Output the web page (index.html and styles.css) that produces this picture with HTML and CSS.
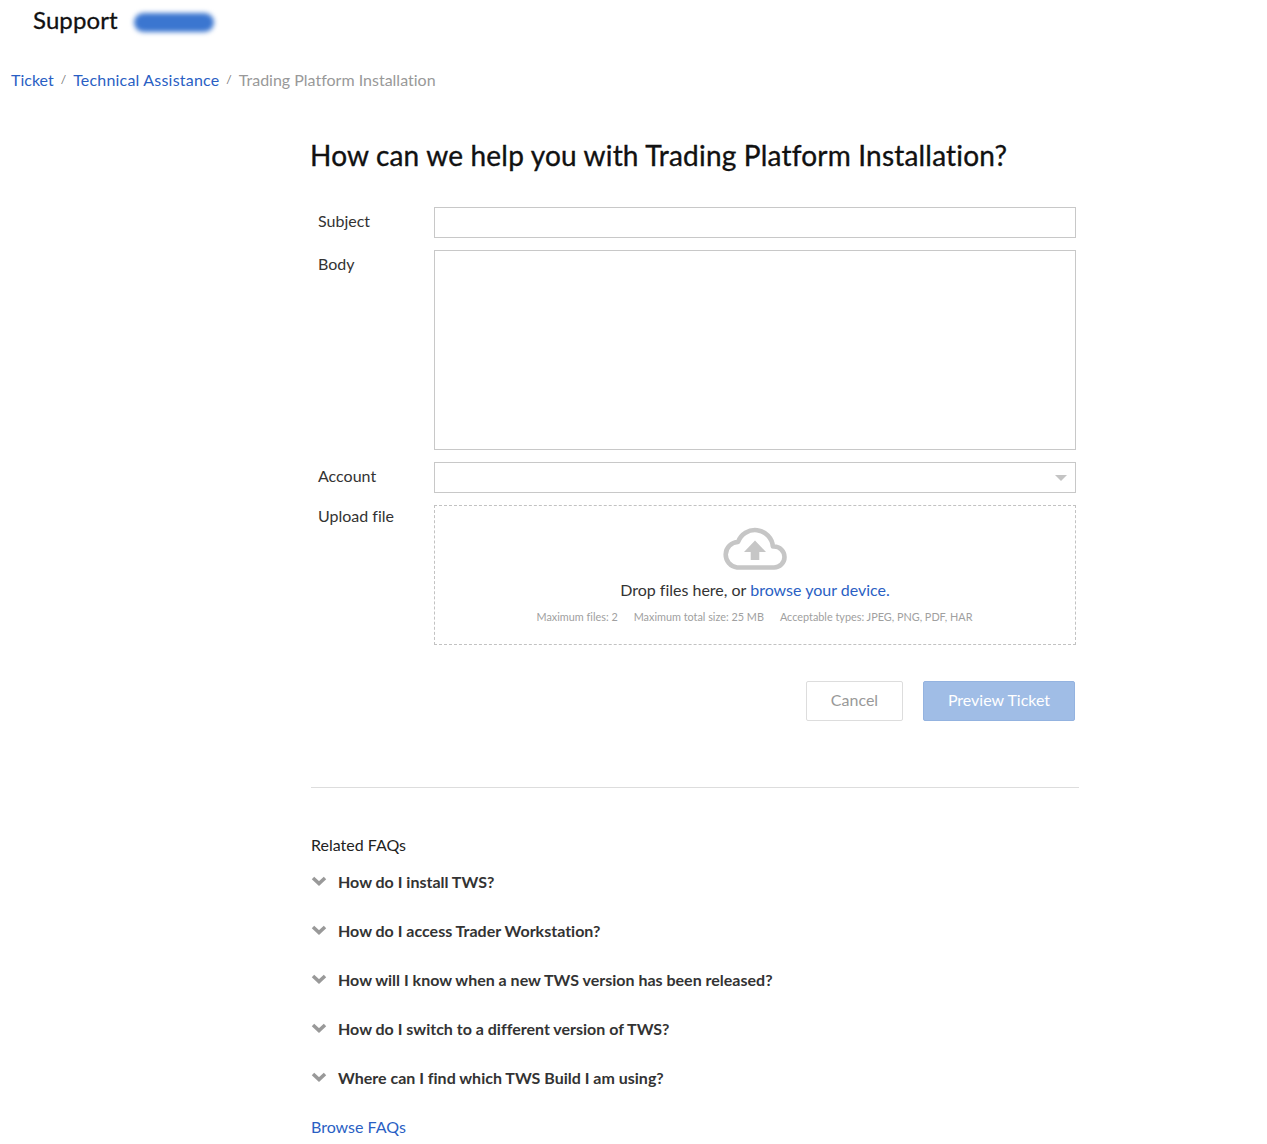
FILE: index.html
```html
<!DOCTYPE html>
<html lang="en">
<head>
<meta charset="utf-8">
<title>Support</title>
<link rel="stylesheet" href="styles.css">
</head>
<body>
<header class="topbar">
  <span class="brand">Support</span>
  <span class="pill"></span>
</header>
<nav class="crumbs">
  <a href="#">Ticket</a><span class="sep">/</span><a class="crumb-mid" href="#">Technical Assistance</a><span class="sep">/</span><span class="current">Trading Platform Installation</span>
</nav>
<main class="content">
  <h1 class="title">How can we help you with Trading Platform Installation?</h1>
  <form class="form">
    <div class="row">
      <label class="label">Subject</label>
      <div class="field input-box"></div>
    </div>
    <div class="row">
      <label class="label">Body</label>
      <div class="field body-box"></div>
    </div>
    <div class="row">
      <label class="label">Account</label>
      <div class="field input-box select-box"><span class="caret"></span></div>
    </div>
    <div class="row">
      <label class="label label-upload">Upload file</label>
      <div class="field drop">
        <svg class="cloud" width="66" height="44" viewBox="0 0 66 44">
          <path d="M15 40.5H52A10.5 10.5 0 0 0 52 19.5H50.9A18 18 0 0 0 16 15A12.8 12.8 0 0 0 15 40.5Z" fill="none" stroke="#c6c6c6" stroke-width="4.6" stroke-linejoin="round"/>
          <path d="M33 13.5 44 25H37.3V33H28.7V25H22Z" fill="#c6c6c6"/>
        </svg>
        <p class="drop-text">Drop files here, or <a href="#">browse your device.</a></p>
        <p class="limits"><span>Maximum files: 2</span><span>Maximum total size: 25 MB</span><span>Acceptable types: JPEG, PNG, PDF, HAR</span></p>
      </div>
    </div>
    <div class="actions">
      <button type="button" class="btn btn-cancel">Cancel</button>
      <button type="button" class="btn btn-preview">Preview Ticket</button>
    </div>
  </form>
  <hr class="rule">
  <section class="faqs">
    <h2 class="faq-head">Related FAQs</h2>
    <ul class="faq-list">
      <li class="faq"><svg class="chev" width="16" height="10" viewBox="0 0 16 10"><path d="M2 2 8 7.5 14 2" fill="none" stroke="#999" stroke-width="3.6"/></svg>How do I install TWS?</li>
      <li class="faq"><svg class="chev" width="16" height="10" viewBox="0 0 16 10"><path d="M2 2 8 7.5 14 2" fill="none" stroke="#999" stroke-width="3.6"/></svg>How do I access Trader Workstation?</li>
      <li class="faq"><svg class="chev" width="16" height="10" viewBox="0 0 16 10"><path d="M2 2 8 7.5 14 2" fill="none" stroke="#999" stroke-width="3.6"/></svg>How will I know when a new TWS version has been released?</li>
      <li class="faq"><svg class="chev" width="16" height="10" viewBox="0 0 16 10"><path d="M2 2 8 7.5 14 2" fill="none" stroke="#999" stroke-width="3.6"/></svg>How do I switch to a different version of TWS?</li>
      <li class="faq"><svg class="chev" width="16" height="10" viewBox="0 0 16 10"><path d="M2 2 8 7.5 14 2" fill="none" stroke="#999" stroke-width="3.6"/></svg>Where can I find which TWS Build I am using?</li>
    </ul>
    <a class="browse" href="#">Browse FAQs</a>
  </section>
</main>
</body>
</html>
```
FILE: styles.css
```css
* { box-sizing: border-box; }
html, body { margin: 0; padding: 0; background: #fff; }
body { font-family: "Lato", "Liberation Sans", sans-serif; font-size: 16px; font-variant-ligatures: none; color: #222; height: 1144px; overflow: hidden; }
a { color: #2a5fc4; text-decoration: none; }
.topbar { display: flex; align-items: center; height: 39px; padding-left: 33px; }
.brand { font-size: 24px; letter-spacing: 0.1px; font-weight: 400; -webkit-text-stroke: 0.3px #111; color: #111; line-height: 39px; }
.pill { width: 80px; height: 19px; margin-left: 16px; margin-top: 5px; border-radius: 10px; background: #3b76d0; filter: blur(2.5px); }
.crumbs { display: flex; align-items: center; height: 24px; margin-top: 28px; padding-left: 11px; font-size: 16px; }
.crumb-mid { letter-spacing: 0.2px; }
.sep { color: #777; margin: 0 7px; font-size: 12px; }
.current { color: #999; }
.content { width: 768px; margin-left: 311px; }
.title { margin: 46px 0 0 -1px; height: 36px; font-size: 28px; letter-spacing: 0.19px; font-weight: 400; -webkit-text-stroke: 0.35px #111; line-height: 36px; color: #111; }
.form { margin-top: 34px; }
.row { display: flex; margin-bottom: 12px; }
.label { width: 116px; margin-left: 7px; padding-top: 5px; font-size: 16px; line-height: 18px; color: #333; }
.label-upload { padding-top: 2px; }
.field { width: 642px; border: 1px solid #c8c8c8; background: #fff; }
.input-box { height: 31px; }
.body-box { height: 200px; }
.select-box { display: flex; align-items: center; justify-content: flex-end; padding-right: 8px; }
.caret { width: 0; height: 0; border-left: 6px solid transparent; border-right: 6px solid transparent; border-top: 6px solid #c4c4c4; margin-top: 1px; }
.drop { height: 140px; border: 1px dashed #c2c2c2; display: flex; flex-direction: column; align-items: center; padding-top: 21px; }
.cloud { display: block; }
.drop-text { margin: 9px 0 0; font-size: 16px; line-height: 20px; color: #333; }
.limits { margin: 10px 0 0; font-size: 10.85px; line-height: 14px; color: #a0a0a0; display: flex; gap: 16px; padding-right: 1px; }
.actions { display: flex; justify-content: flex-end; gap: 20px; width: 768px; padding-right: 4px; margin-top: 36px; }
.btn { height: 40px; font-family: inherit; font-variant-ligatures: none; font-size: 16px; border-radius: 2px; padding: 0 0 3px; }
.btn-cancel { width: 97px; background: #fff; border: 1px solid #ddd; color: #999; }
.btn-preview { width: 152px; background: #a0bde6; border: 1px solid #94b3e0; color: #fff; }
.rule { margin: 66px 0 0; border: 0; border-top: 1px solid #ddd; }
.faqs { margin-top: 47px; }
.faq-head { margin: 0; font-size: 16px; font-weight: 400; line-height: 20px; color: #222; }
.faq-list { list-style: none; margin: 13px 0 0; padding: 0; }
.faq { display: flex; align-items: center; height: 49px; padding-bottom: 23px; font-size: 16px; font-weight: 700; color: #333; }
.chev { margin: 0 11px 0 0; flex: none; }
.browse { display: block; font-size: 16px; line-height: 20px; margin-top: 4px; }
```
